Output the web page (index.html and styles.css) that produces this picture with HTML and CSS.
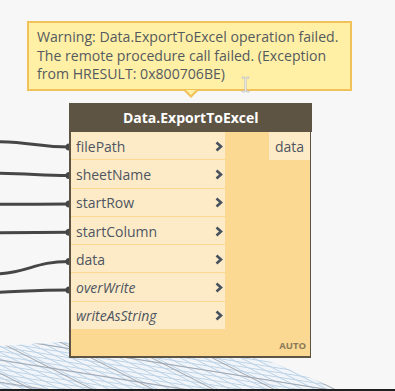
FILE: index.html
```html
<!DOCTYPE html>
<html>
<head>
<meta charset="utf-8">
<link rel="stylesheet" href="styles.css">
</head>
<body>
<div class="canvas">
  <svg class="grid" width="395" height="391" viewBox="0 0 395 391">
    <defs>
      <pattern id="minorA" width="400" height="4.5" patternUnits="userSpaceOnUse" patternTransform="rotate(9)">
        <line x1="0" y1="0.5" x2="400" y2="0.5" stroke="#bcd2e6" stroke-width="1"/>
      </pattern>
      <pattern id="minorB" width="400" height="5.5" patternUnits="userSpaceOnUse" patternTransform="rotate(27)">
        <line x1="0" y1="0.5" x2="400" y2="0.5" stroke="#bcd2e6" stroke-width="1"/>
      </pattern>
      <pattern id="majorA" width="400" height="22" patternUnits="userSpaceOnUse" patternTransform="rotate(9) translate(0,3)">
        <line x1="0" y1="0.5" x2="400" y2="0.5" stroke="#9ca2ab" stroke-width="0.9"/>
      </pattern>
      <pattern id="majorB" width="400" height="27.5" patternUnits="userSpaceOnUse" patternTransform="rotate(27) translate(0,2)">
        <line x1="0" y1="0.5" x2="400" y2="0.5" stroke="#9ca2ab" stroke-width="0.9"/>
      </pattern>
      <clipPath id="plane">
        <polygon points="0,346 200,333 342,391 0,391"/>
      </clipPath>
    </defs>
    <g clip-path="url(#plane)">
      <rect x="0" y="320" width="395" height="71" fill="#f1f5f9"/>
      <rect x="0" y="320" width="395" height="71" fill="url(#minorA)"/>
      <rect x="0" y="320" width="395" height="71" fill="url(#minorB)"/>
      <rect x="0" y="320" width="395" height="71" fill="url(#majorA)"/>
      <rect x="0" y="320" width="395" height="71" fill="url(#majorB)"/>
    </g>
  </svg>

  <svg class="wires" width="395" height="391" viewBox="0 0 395 391">
    <g fill="none" stroke="#464646" stroke-width="3" stroke-linecap="round">
      <path d="M-2,141.7 C30,142 40,147 69,147"/>
      <path d="M-2,173.3 C30,173.5 40,175.5 69,175.5"/>
      <path d="M-2,204.3 C30,204.3 40,204 69,204"/>
      <path d="M-2,232.7 C30,232.7 40,232.3 69,232.3"/>
      <path d="M-2,274 C30,272 35,261.5 69,261.5"/>
      <path d="M-2,292.3 C30,291 40,290 69,290"/>
    </g>
    <g fill="#464646">
      <circle cx="69" cy="147" r="3.5"/>
      <circle cx="69" cy="175.5" r="3.5"/>
      <circle cx="69" cy="204" r="3.5"/>
      <circle cx="69" cy="232.3" r="3.5"/>
      <circle cx="69" cy="261.5" r="3.5"/>
      <circle cx="69" cy="290" r="3.5"/>
    </g>
  </svg>

  <div class="tooltip">
    Warning: Data.ExportToExcel operation failed.<br>
    The remote procedure call failed. (Exception<br>
    from HRESULT: 0x800706BE)
  </div>

  <svg class="cursor" width="9" height="17" viewBox="0 0 9 17">
    <path d="M1,1 H3.5 L4.5,2 L5.5,1 H8 V2.2 H5.2 V14.8 H8 V16 H5.5 L4.5,15 L3.5,16 H1 V14.8 H3.8 V2.2 H1 Z" fill="#ffffff" stroke="#b8b8b8" stroke-width="0.7"/>
  </svg>

  <div class="node">
    <div class="node-header">Data.ExportToExcel</div>
    <div class="node-body">
      <div class="inputs">
        <div class="port-in"><span>filePath</span><svg class="chev" width="8" height="11" viewBox="0 0 8 11"><polyline points="1.5,1.5 6,5.5 1.5,9.5"/></svg></div>
        <div class="port-in"><span>sheetName</span><svg class="chev" width="8" height="11" viewBox="0 0 8 11"><polyline points="1.5,1.5 6,5.5 1.5,9.5"/></svg></div>
        <div class="port-in"><span>startRow</span><svg class="chev" width="8" height="11" viewBox="0 0 8 11"><polyline points="1.5,1.5 6,5.5 1.5,9.5"/></svg></div>
        <div class="port-in"><span>startColumn</span><svg class="chev" width="8" height="11" viewBox="0 0 8 11"><polyline points="1.5,1.5 6,5.5 1.5,9.5"/></svg></div>
        <div class="port-in"><span>data</span><svg class="chev" width="8" height="11" viewBox="0 0 8 11"><polyline points="1.5,1.5 6,5.5 1.5,9.5"/></svg></div>
        <div class="port-in"><span class="opt">overWrite</span><svg class="chev" width="8" height="11" viewBox="0 0 8 11"><polyline points="1.5,1.5 6,5.5 1.5,9.5"/></svg></div>
        <div class="port-in"><span class="opt">writeAsString</span><svg class="chev" width="8" height="11" viewBox="0 0 8 11"><polyline points="1.5,1.5 6,5.5 1.5,9.5"/></svg></div>
      </div>
      <div class="outputs">
        <div class="port-out">data</div>
      </div>
    </div>
    <div class="node-footer"><span class="auto">AUTO</span></div>
  </div>

  <div class="baseline"></div>
</div>
</body>
</html>
```

FILE: styles.css
```css
* { box-sizing: border-box; }
html, body {
  margin: 0;
  padding: 0;
  background: #f7f7f7;
}
.canvas {
  position: relative;
  width: 395px;
  height: 391px;
  overflow: hidden;
  font-family: "Open Sans", "Noto Sans", sans-serif;
}
.grid, .wires {
  position: absolute;
  left: 0;
  top: 0;
}
.tooltip {
  position: absolute;
  left: 27px;
  top: 21px;
  width: 325px;
  height: 70px;
  padding: 5px 0 0 8px;
  background: #fff0a6;
  border: 2px solid #f2c25a;
  color: #555a5f;
  font-size: 14.1px;
  line-height: 18.5px;
  white-space: nowrap;
}
.tooltip::before,
.tooltip::after {
  content: "";
  position: absolute;
  width: 0;
  height: 0;
  border-style: solid;
  border-color: transparent;
}
.tooltip::before {
  left: 155px;
  top: 68px;
  border-width: 7px 7px 0 7px;
  border-top-color: #f2c25a;
}
.tooltip::after {
  left: 157px;
  top: 67px;
  border-width: 5px 5px 0 5px;
  border-top-color: #fff0a6;
}
.cursor {
  position: absolute;
  left: 241px;
  top: 76px;
}
.node {
  position: absolute;
  left: 69px;
  top: 103px;
  width: 242px;
  display: flex;
  flex-direction: column;
  background: #fcd993;
  border: 2px solid #5e5444;
  border-top: 0;
  border-right-width: 1.5px;
}
.node-header {
  height: 29px;
  margin: 0 -1.5px 0 -2px;
  background: #5e5444;
  color: #ffffff;
  font-weight: 700;
  font-size: 14px;
  line-height: 29px;
  text-align: center;
  padding-left: 1px;
}
.node-body {
  display: flex;
  justify-content: space-between;
}
.inputs {
  width: 154px;
  display: flex;
  flex-direction: column;
  gap: 1px;
}
.port-in {
  height: 27.3px;
  background: #fdebc8;
  display: flex;
  align-items: center;
  justify-content: space-between;
  padding: 1px 2px 0 5px;
  color: #4e5561;
  font-size: 14px;
}
.port-in .opt {
  font-style: italic;
}
.chev polyline {
  fill: none;
  stroke: #48525f;
  stroke-width: 2.6;
}
.outputs {
  width: 41px;
}
.port-out {
  height: 28px;
  background: #fdebc8;
  color: #4e5561;
  font-size: 14px;
  line-height: 29px;
  text-align: right;
  padding-right: 6px;
}
.node-footer {
  height: 27px;
  display: flex;
  justify-content: flex-end;
  align-items: flex-end;
  padding: 0 4px 4px 0;
}
.auto {
  font-size: 9.5px;
  font-weight: 700;
  color: #8a7a58;
  line-height: 12px;
}
.baseline {
  position: absolute;
  left: 0;
  bottom: 0;
  width: 395px;
  height: 2px;
  background: #1f1f1f;
}
```
